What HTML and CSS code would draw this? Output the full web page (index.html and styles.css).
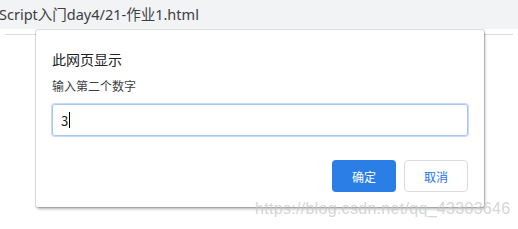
FILE: index.html
```html
<!DOCTYPE html>
<html lang="zh-CN">
<head>
    <meta charset="UTF-8">
    <title>Script入门day4/21-作业1.html</title>
    <link rel="stylesheet" href="styles.css">
</head>
<body>
    <div class="tabbar">
        <span class="tab-title">Script入门day4/21-作业1.html</span>
    </div>
    <div class="page"></div>

    <div class="dialog">
        <div class="dialog-title">此网页显示</div>
        <div class="dialog-message">输入第二个数字</div>
        <div class="dialog-input">
            <span>3</span><span class="caret"></span>
        </div>
        <div class="dialog-buttons">
            <button class="btn btn-ok">确定</button>
            <button class="btn btn-cancel">取消</button>
        </div>
    </div>

    <div class="watermark">https://blog.csdn.net/qq_43303646</div>
</body>
</html>
```

FILE: styles.css
```css
body {
    margin: 0;
    width: 518px;
    height: 229px;
    overflow: hidden;
    background: #fff;
    font-family: "Noto Sans", "Noto Sans CJK SC", sans-serif;
    color: #333;
}
.tabbar {
    height: 29px;
    background: #f1f3f4;
    border-bottom: 5px solid #fff;
    box-shadow: 0 6px 0 -5px #dadce0;
    display: flex;
    align-items: center;
    overflow: hidden;
}
.tab-title {
    font-size: 14.5px;
    margin-left: -1px;
    margin-top: -3px;
    color: #3c4043;
    white-space: nowrap;
}
.dialog {
    position: absolute;
    left: 36px;
    top: 30px;
    width: 448px;
    height: 177px;
    box-sizing: border-box;
    background: #fff;
    border-radius: 2px;
    box-shadow: 0 0 0 1px rgba(0,0,0,0.12), 1px 2px 3px rgba(0,0,0,0.3);
    padding: 19px 16px 0 16px;
    font-family: "Noto Sans CJK SC", sans-serif;
}
.dialog-title {
    font-size: 14px;
    line-height: 20px;
    color: #202124;
}
.dialog-message {
    font-size: 12px;
    line-height: 18px;
    margin-top: 8px;
    color: #3c4043;
}
.dialog-input {
    margin-top: 9px;
    height: 32px;
    box-sizing: border-box;
    border: 1px solid #a8c7fa;
    box-shadow: 0 0 0 1px #c6d9f7;
    border-radius: 3px;
    display: flex;
    align-items: center;
    padding-left: 8px;
    font-size: 13px;
    color: #202124;
}
.caret {
    width: 1px;
    height: 16px;
    background: #000;
    margin-left: 1px;
}
.dialog-buttons {
    display: flex;
    justify-content: flex-end;
    gap: 8px;
    margin-top: 24px;
}
.btn {
    width: 64px;
    height: 32px;
    border-radius: 4px;
    font-family: "Noto Sans CJK SC", sans-serif;
    font-size: 12px;
    padding: 0;
}
.btn-ok {
    background: #2a7ee6;
    color: #fff;
    border: none;
}
.btn-cancel {
    background: #fff;
    color: #1a73e8;
    border: 1px solid #dadce0;
}
.watermark {
    position: absolute;
    left: 255px;
    top: 200px;
    font-family: "Liberation Sans", sans-serif;
    font-size: 16px;
    color: rgba(200,200,200,0.75);
    letter-spacing: 0.3px;
    white-space: nowrap;
}
```
